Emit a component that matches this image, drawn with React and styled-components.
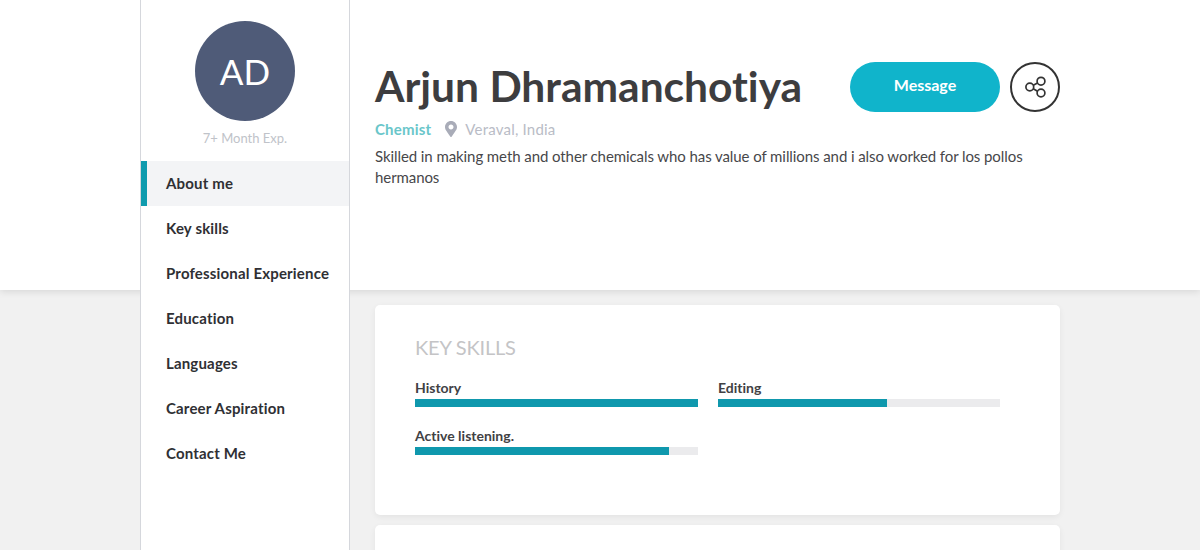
import React from "react"
import styled, { createGlobalStyle } from "styled-components"
import { FaMapMarkerAlt } from "react-icons/fa"

const GlobalStyle = createGlobalStyle`
  html, body {
    margin: 0;
    padding: 0;
    height: 100%;
    overflow: hidden;
    background: #f1f1f1;
    font-family: Lato, "Liberation Sans", sans-serif;
    font-variant-ligatures: none;
  }
  * {
    box-sizing: border-box;
  }
`;

const Top = styled.header`
  background: #fff;
  height: 290px;
  box-shadow: 0 2px 7px rgba(0, 0, 0, 0.1);
`;

const Wrap = styled.div`
  width: 920px;
  margin-left: 140px;
  display: flex;
  gap: 25px;
`;

const Sidebar = styled.aside`
  width: 210px;
  height: 700px;
  flex-shrink: 0;
  background: #fff;
  border-left: 1px solid #d5d7dc;
  border-right: 1px solid #d5d7dc;
  position: relative;
  z-index: 2;
  padding-top: 21px;
`;

const Avatar = styled.div`
  width: 100px;
  height: 100px;
  border-radius: 50%;
  background: #4f5b78;
  color: #fff;
  font-size: 35px;
  display: flex;
  align-items: center;
  justify-content: center;
  margin: 0 auto;
`;

const Exp = styled.p`
  margin: 9px 0 14px;
  height: 17px;
  line-height: 17px;
  text-align: center;
  font-size: 13px;
  color: #c0c3c9;
`;

const Nav = styled.nav`
  display: flex;
  flex-direction: column;
`;

const NavItem = styled.a`
  height: 45px;
  line-height: 44px;
  padding-left: ${p => (p.$active ? "19px" : "25px")};
  font-size: 15px;
  letter-spacing: 0.17px;
  font-weight: 700;
  color: #2f3034;
  background: ${p => (p.$active ? "#f3f4f6" : "transparent")};
  border-left: ${p => (p.$active ? "6px solid #0f9bae" : "none")};
`;

const Profile = styled.div`
  flex: 1;
  min-width: 0;
  padding-top: 62px;
`;

const TitleRow = styled.div`
  display: flex;
  justify-content: space-between;
  align-items: flex-start;
`;

const Name = styled.h1`
  margin: 0;
  font-size: 42.5px;
  line-height: 48px;
  height: 50px;
  font-weight: 700;
  color: #3d3d3f;
  white-space: nowrap;
`;

const Actions = styled.div`
  display: flex;
  gap: 10px;
`;

const MessageButton = styled.button`
  width: 150px;
  height: 50px;
  border: none;
  border-radius: 25px;
  background: #10b4cb;
  color: #fff;
  font-family: inherit;
  font-size: 16px;
  font-weight: 700;
  line-height: 46px;
  padding: 0 0 4px;
`;

const ShareButton = styled.button`
  width: 50px;
  height: 50px;
  border: 2px solid #333;
  border-radius: 50%;
  background: #fff;
  color: #333;
  padding: 0;
  display: flex;
  align-items: center;
  justify-content: center;
`;

const Meta = styled.div`
  display: flex;
  align-items: center;
  margin-top: 6px;
  height: 22px;
  font-size: 15px;
`;

const Role = styled.span`
  font-weight: 700;
  color: #6ac6ca;
  letter-spacing: 0.2px;
`;

const Place = styled.span`
  display: flex;
  align-items: center;
  gap: 6px;
  margin-left: 12px;
  color: #b9bcc6;
  letter-spacing: 0.2px;

  svg {
    color: #a9acb8;
  }
`;

const Bio = styled.p`
  margin: 6px 0 0;
  font-size: 15px;
  line-height: 20.6px;
  letter-spacing: -0.08px;
  color: #47474a;
`;

const Content = styled.main`
  width: 685px;
  margin-left: 375px;
  padding-top: 15px;
  display: flex;
  flex-direction: column;
  gap: 10px;
`;

const Card = styled.section`
  background: #fff;
  border-radius: 5px;
  box-shadow: 0 2px 6px rgba(0, 0, 0, 0.06);
  height: ${p => p.$height}px;
  padding: 29px 40px;
`;

const CardTitle = styled.h2`
  margin: 0 0 20px;
  font-size: 20px;
  line-height: 26px;
  letter-spacing: -0.2px;
  font-weight: 400;
  color: #c4c4c6;
  text-transform: uppercase;
`;

const SkillGrid = styled.div`
  display: grid;
  grid-template-columns: 283px 282px;
  column-gap: 20px;
  row-gap: 21px;
`;

const SkillName = styled.div`
  font-size: 14px;
  line-height: 16px;
  font-weight: 700;
  color: #414144;
  margin-bottom: 3px;
`;

const Track = styled.div`
  height: 8px;
  background: #ebebed;
`;

const Fill = styled.div`
  height: 100%;
  background: #0f98ad;
`;

const navItems = [
  "About me",
  "Key skills",
  "Professional Experience",
  "Education",
  "Languages",
  "Career Aspiration",
  "Contact Me",
];

const skills = [
  { name: "History", level: 100 },
  { name: "Editing", level: 60 },
  { name: "Active listening.", level: 89.7 },
];

function ShareIcon() {
  return (
    <svg width="24" height="24" viewBox="0 0 24 24" fill="none" stroke="currentColor" strokeWidth="1.7">
      <circle cx="6.8" cy="12" r="3.9" />
      <circle cx="18" cy="6.2" r="3.9" />
      <circle cx="18" cy="18" r="3.9" />
      <path d="M10.3 10.2 14.5 8M10.3 13.8 14.5 16.2" />
    </svg>
  );
}

function App() {
  return (
    <>
      <GlobalStyle />
      <Top>
        <Wrap>
          <Sidebar>
            <Avatar>AD</Avatar>
            <Exp>7+ Month Exp.</Exp>
            <Nav>
              {navItems.map((item, i) => (
                <NavItem key={item} $active={i === 0}>{item}</NavItem>
              ))}
            </Nav>
          </Sidebar>
          <Profile>
            <TitleRow>
              <Name>Arjun Dhramanchotiya</Name>
              <Actions>
                <MessageButton>Message</MessageButton>
                <ShareButton><ShareIcon /></ShareButton>
              </Actions>
            </TitleRow>
            <Meta>
              <Role>Chemist</Role>
              <Place><FaMapMarkerAlt size={16} />Veraval, India</Place>
            </Meta>
            <Bio>Skilled in making meth and other chemicals who has value of millions and i also worked for los pollos hermanos</Bio>
          </Profile>
        </Wrap>
      </Top>
      <Content>
        <Card $height={210}>
          <CardTitle>Key skills</CardTitle>
          <SkillGrid>
            {skills.map(s => (
              <div key={s.name}>
                <SkillName>{s.name}</SkillName>
                <Track><Fill style={{ width: `${s.level}%` }} /></Track>
              </div>
            ))}
          </SkillGrid>
        </Card>
        <Card $height={200} />
      </Content>
    </>
  );
}

export default App;
